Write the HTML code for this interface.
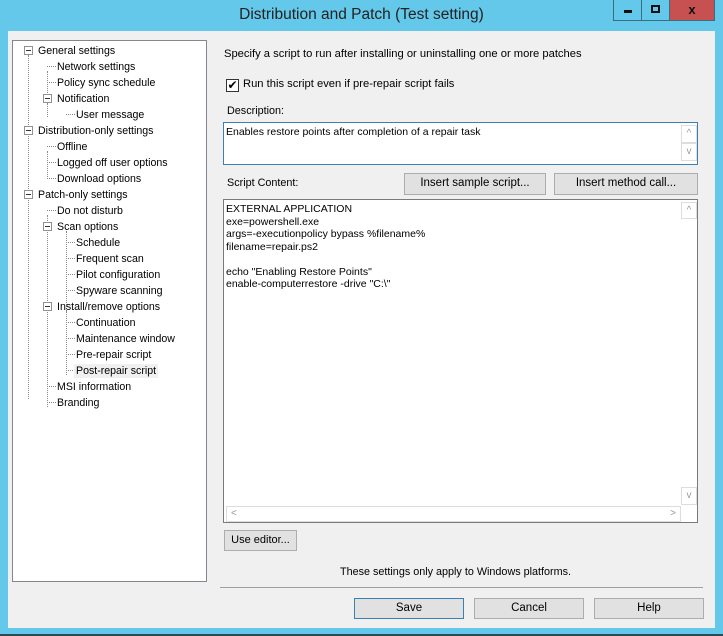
<!DOCTYPE html><html><head><style>
body{margin:0;width:723px;height:636px;background:#63c8ea;position:relative;overflow:hidden;font-family:"Liberation Sans",sans-serif;font-size:11.2px;color:#000}
.a{position:absolute}
.client{left:8px;top:31px;width:707px;height:597px;background:#f0f0f0}
.title{left:0;top:6px;width:723px;text-align:center;font-size:15.5px;color:#222}
.tb{top:0;height:21px;border:1px solid #3a6d80;border-top:none;box-sizing:border-box}
.tree{left:12px;top:40px;width:195px;height:542px;background:#fff;border:1px solid #828790;box-sizing:border-box}
.it{position:absolute;white-space:nowrap;font-size:10.6px;margin-top:2px}
.pm{position:absolute;width:9px;height:9px;border:1px solid #919191;box-sizing:border-box;background:#fff}
.pm:after{content:"";position:absolute;left:1px;top:3px;width:5px;height:1px;background:#333}
.vl{position:absolute;border-left:1px dotted #888;width:0}
.hl{position:absolute;border-top:1px dotted #888;height:0}
.box{background:#fff;border:1px solid #7a7a7a;box-sizing:border-box}
.btn{position:absolute;background:#e1e1e1;border:1px solid #adadad;box-sizing:border-box;text-align:center;font-size:11.5px;line-height:19px}
.sb{position:absolute;background:#fff;border:1px solid #ddd;box-sizing:border-box;color:#999;font-size:10px;text-align:center}
</style></head><body>
<div class="a title">Distribution and Patch (Test setting)</div>
<div class="a tb" style="left:613px;width:29px;background:#63c8ea"><div class="a" style="left:10px;top:10px;width:8px;height:3px;background:#111"></div></div>
<div class="a tb" style="left:641px;width:29px;background:#63c8ea"><div class="a" style="left:9px;top:5px;width:9px;height:8px;border:2px solid #111;box-sizing:border-box"></div></div>
<div class="a tb" style="left:669px;width:46px;background:#c75050;color:#111;font-weight:bold;text-align:center;font-size:13px;line-height:19px">x</div>
<div class="a client"></div>
<div class="a" style="left:0;top:634px;width:723px;height:2px;background:#2a4a55"></div>

<div class="a tree">
<div class="vl" style="left:15px;top:14px;height:344px"></div>
<div class="vl" style="left:34px;top:62px;height:14px"></div>
<div class="vl" style="left:34px;top:30px;height:28px"></div>
<div class="vl" style="left:34px;top:110px;height:28px"></div>
<div class="vl" style="left:34px;top:174px;height:192px"></div>
<div class="vl" style="left:53px;top:190px;height:80px"></div>
<div class="vl" style="left:53px;top:270px;height:64px"></div>
<div class="hl" style="left:34px;top:25px;width:9px"></div>
<div class="hl" style="left:34px;top:41px;width:9px"></div>
<div class="hl" style="left:53px;top:73px;width:9px"></div>
<div class="hl" style="left:34px;top:105px;width:9px"></div>
<div class="hl" style="left:34px;top:121px;width:9px"></div>
<div class="hl" style="left:34px;top:137px;width:9px"></div>
<div class="hl" style="left:34px;top:169px;width:9px"></div>
<div class="hl" style="left:53px;top:201px;width:9px"></div>
<div class="hl" style="left:53px;top:217px;width:9px"></div>
<div class="hl" style="left:53px;top:233px;width:9px"></div>
<div class="hl" style="left:53px;top:249px;width:9px"></div>
<div class="hl" style="left:53px;top:281px;width:9px"></div>
<div class="hl" style="left:53px;top:297px;width:9px"></div>
<div class="hl" style="left:53px;top:313px;width:9px"></div>
<div class="hl" style="left:53px;top:329px;width:9px"></div>
<div class="hl" style="left:34px;top:345px;width:9px"></div>
<div class="hl" style="left:34px;top:361px;width:9px"></div>
<div class="pm" style="left:11px;top:5px"></div>
<div class="pm" style="left:30px;top:53px"></div>
<div class="pm" style="left:11px;top:85px"></div>
<div class="pm" style="left:11px;top:149px"></div>
<div class="pm" style="left:30px;top:181px"></div>
<div class="pm" style="left:30px;top:261px"></div>
<div class="it" style="left:25px;top:2px">General settings</div>
<div class="it" style="left:44px;top:18px">Network settings</div>
<div class="it" style="left:44px;top:34px">Policy sync schedule</div>
<div class="it" style="left:44px;top:50px">Notification</div>
<div class="it" style="left:63px;top:66px">User message</div>
<div class="it" style="left:25px;top:82px">Distribution-only settings</div>
<div class="it" style="left:44px;top:98px">Offline</div>
<div class="it" style="left:44px;top:114px">Logged off user options</div>
<div class="it" style="left:44px;top:130px">Download options</div>
<div class="it" style="left:25px;top:146px">Patch-only settings</div>
<div class="it" style="left:44px;top:162px">Do not disturb</div>
<div class="it" style="left:44px;top:178px">Scan options</div>
<div class="it" style="left:63px;top:194px">Schedule</div>
<div class="it" style="left:63px;top:210px">Frequent scan</div>
<div class="it" style="left:63px;top:226px">Pilot configuration</div>
<div class="it" style="left:63px;top:242px">Spyware scanning</div>
<div class="it" style="left:44px;top:258px">Install/remove options</div>
<div class="it" style="left:63px;top:274px">Continuation</div>
<div class="it" style="left:63px;top:290px">Maintenance window</div>
<div class="it" style="left:63px;top:306px">Pre-repair script</div>
<div class="it" style="left:61px;top:321px;background:#f0f0f0;padding:1px 2px">Post-repair script</div>
<div class="it" style="left:44px;top:338px">MSI information</div>
<div class="it" style="left:44px;top:354px">Branding</div>
</div>

<div class="a" style="left:224px;top:48px">Specify a script to run after installing or uninstalling one or more patches</div>
<div class="a" style="left:226px;top:79px;width:13px;height:13px;border:1px solid #333;background:#fff;box-sizing:border-box;font-size:12px;line-height:11px;text-align:center">✔</div>
<div class="a" style="left:243px;top:78px">Run this script even if pre-repair script fails</div>
<div class="a" style="left:227px;top:105px;font-size:10.8px">Description:</div>
<div class="a box" style="left:223px;top:122px;width:475px;height:43px;border-color:#3c7fb1"><div class="a" style="left:2px;top:3px;font-size:10.5px">Enables restore points after completion of a repair task</div>
<div class="sb" style="left:457px;top:2px;width:16px;height:18px;line-height:16px">^</div>
<div class="sb" style="left:457px;top:20px;width:16px;height:18px;line-height:16px">v</div></div>
<div class="a" style="left:227px;top:177px;font-size:10.8px">Script Content:</div>
<div class="btn" style="left:404px;top:173px;width:142px;height:22px">Insert sample script...</div>
<div class="btn" style="left:554px;top:173px;width:144px;height:22px">Insert method call...</div>
<div class="a box" style="left:223px;top:199px;width:475px;height:324px;line-height:12.5px"><div class="a" style="left:2px;top:3px;white-space:pre;font-size:10.5px">EXTERNAL APPLICATION
exe=powershell.exe
args=-executionpolicy bypass %filename%
filename=repair.ps2

echo "Enabling Restore Points"
enable-computerrestore -drive "C:\"</div>
<div class="sb" style="left:457px;top:2px;width:16px;height:17px;line-height:15px">^</div>
<div class="sb" style="left:457px;top:287px;width:16px;height:18px;line-height:16px">v</div>
<div class="sb" style="left:2px;top:306px;width:455px;height:16px;line-height:14px;text-align:left;padding-left:4px">&lt;<span style="position:absolute;right:4px">&gt;</span></div></div>
<div class="btn" style="left:224px;top:530px;width:73px;height:21px;font-size:11px">Use editor...</div>
<div class="a" style="left:340px;top:566px;font-size:10.8px">These settings only apply to Windows platforms.</div>
<div class="a" style="left:220px;top:587px;width:483px;height:1px;background:#a0a0a0"></div>
<div class="btn" style="left:354px;top:598px;width:110px;height:21px;border-color:#3c7fb1">Save</div>
<div class="btn" style="left:474px;top:598px;width:110px;height:21px">Cancel</div>
<div class="btn" style="left:594px;top:598px;width:110px;height:21px">Help</div>
</body></html>
